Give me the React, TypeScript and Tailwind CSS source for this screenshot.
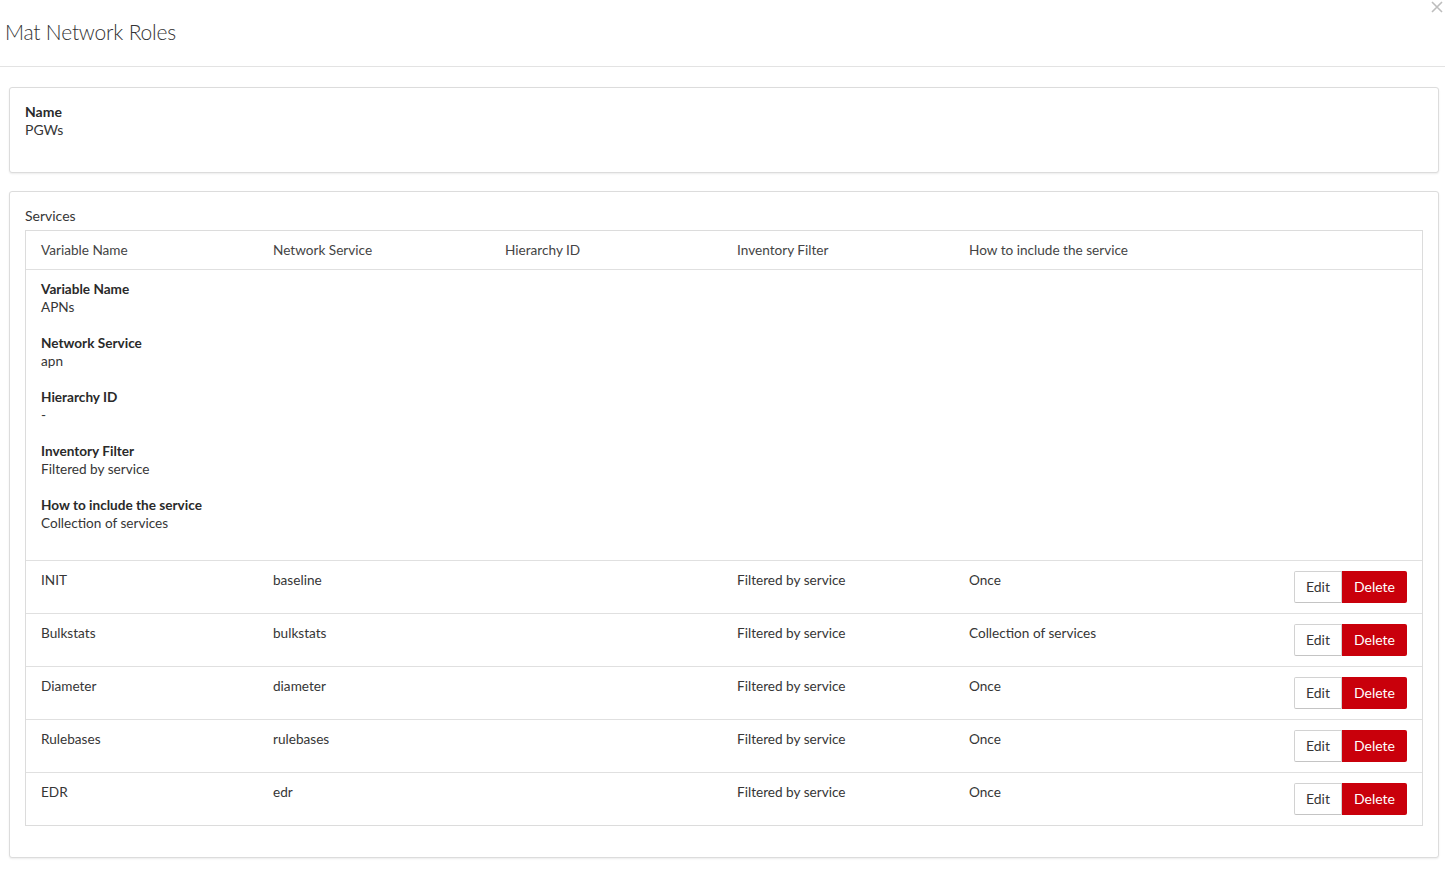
import * as React from 'react';

type Service = {
  variable: string;
  network: string;
  hierarchy: string;
  filter: string;
  include: string;
};

const services: Service[] = [
  { variable: 'INIT', network: 'baseline', hierarchy: '', filter: 'Filtered by service', include: 'Once' },
  { variable: 'Bulkstats', network: 'bulkstats', hierarchy: '', filter: 'Filtered by service', include: 'Collection of services' },
  { variable: 'Diameter', network: 'diameter', hierarchy: '', filter: 'Filtered by service', include: 'Once' },
  { variable: 'Rulebases', network: 'rulebases', hierarchy: '', filter: 'Filtered by service', include: 'Once' },
  { variable: 'EDR', network: 'edr', hierarchy: '', filter: 'Filtered by service', include: 'Once' },
];

const expanded: [string, string][] = [
  ['Variable Name', 'APNs'],
  ['Network Service', 'apn'],
  ['Hierarchy ID', '-'],
  ['Inventory Filter', 'Filtered by service'],
  ['How to include the service', 'Collection of services'],
];

function Card({ className, children }: { className?: string; children: React.ReactNode }) {
  return (
    <div
      className={`rounded-[3px] border border-[#dcdcdc] bg-white shadow-[0_1px_2px_rgba(0,0,0,0.08)] ${className ?? ''}`}
    >
      {children}
    </div>
  );
}

function ServiceRow({ s }: { s: Service }) {
  return (
    <div className="grid h-[53px] grid-cols-[repeat(5,232px)_1fr] border-t border-[#e0e0e0] text-[13.6px] leading-[18px] text-[#363636]">
      <div className="pl-[15px] pt-[10px]">{s.variable}</div>
      <div className="pl-[15px] pt-[10px]">{s.network}</div>
      <div className="pl-[15px] pt-[10px]">{s.hierarchy}</div>
      <div className="pl-[15px] pt-[10px]">{s.filter}</div>
      <div className="pl-[15px] pt-[10px]">{s.include}</div>
      <div className="flex items-start justify-end pr-[15px] pt-[10px]">
        <button
          type="button"
          className="h-[32px] w-[48px] rounded-l-[2px] border border-[#d2d2d2] border-b-[#c4c4c4] bg-white text-[14px] text-[#363636]"
        >
          Edit
        </button>
        <button
          type="button"
          className="h-[32px] w-[65px] rounded-r-[2px] bg-[#c9000b] text-[14px] text-white"
        >
          Delete
        </button>
      </div>
    </div>
  );
}

export default function App() {
  return (
    <div className="relative min-h-screen bg-white font-['Lato','Noto_Sans',sans-serif] text-[#333]">
      <button type="button" aria-label="Close" className="absolute right-[1px] top-0 text-[#bdbdbd]">
        <svg width="14" height="14" viewBox="0 0 14 14">
          <path d="M2 2 L12 12 M12 2 L2 12" stroke="currentColor" strokeWidth="1.6" />
        </svg>
      </button>
      <div className="flex h-[67px] items-center border-b border-[#e3e3e3] pb-[3px] pl-[5px]">
        <h1 className="text-[21px] font-light leading-none tracking-[-0.2px] text-[#333]">Mat Network Roles</h1>
      </div>

      <div className="flex flex-col gap-[18px] pb-4 pl-[9px] pr-[6px] pt-[20px]">
        <Card className="h-[86px] px-[15px] pt-[15px]">
          <div className="text-[14px] font-bold leading-[18px] text-[#2a2a2a]">Name</div>
          <div className="text-[14px] leading-[18px] text-[#363636]">PGWs</div>
        </Card>

        <Card className="px-[15px] pb-[31px] pt-[15px]">
          <div className="mb-[5px] text-[14px] leading-[18px] text-[#363636]">Services</div>
          <div className="border border-[#dcdcdc]">
            <div className="grid h-[38px] grid-cols-[repeat(5,232px)_1fr] items-center text-[13.6px] leading-[18px] text-[#444]">
              <div className="pl-[15px]">Variable Name</div>
              <div className="pl-[15px]">Network Service</div>
              <div className="pl-[15px]">Hierarchy ID</div>
              <div className="pl-[15px]">Inventory Filter</div>
              <div className="pl-[15px]">How to include the service</div>
              <div />
            </div>
            <div className="flex h-[291px] flex-col gap-[18px] border-t border-[#e0e0e0] pl-[15px] pt-[10px] text-[13.6px] leading-[18px]">
              {expanded.map(([label, value]) => (
                <div key={label}>
                  <div className="font-bold text-[#2a2a2a]">{label}</div>
                  <div className="text-[#363636]">{value}</div>
                </div>
              ))}
            </div>
            {services.map((s) => (
              <ServiceRow key={s.variable} s={s} />
            ))}
          </div>
        </Card>
      </div>
    </div>
  );
}
